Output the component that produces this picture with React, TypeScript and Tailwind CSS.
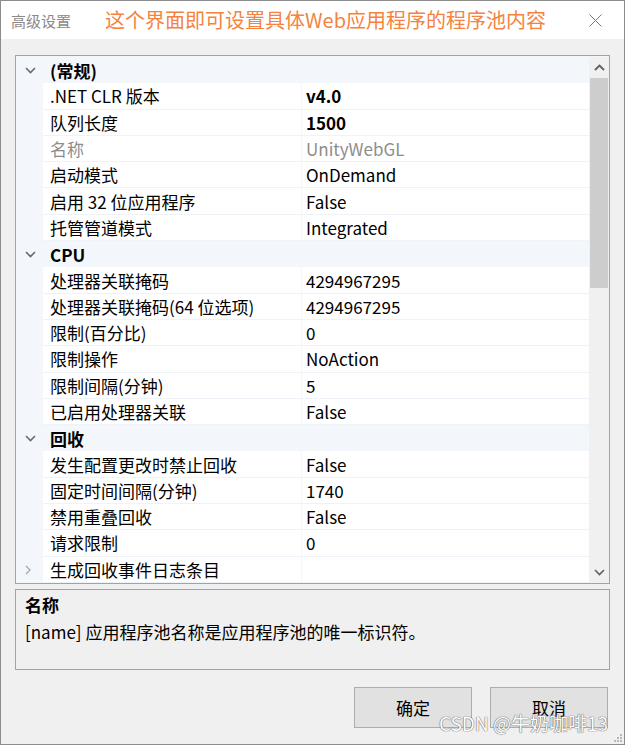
import React from 'react';

type Row =
  | { kind: 'cat'; label: string }
  | { kind: 'item'; name: string; value: string; bold?: boolean; disabled?: boolean; expand?: boolean };

const rows: Row[] = [
  { kind: 'cat', label: '(常规)' },
  { kind: 'item', name: '.NET CLR 版本', value: 'v4.0', bold: true },
  { kind: 'item', name: '队列长度', value: '1500', bold: true },
  { kind: 'item', name: '名称', value: 'UnityWebGL', disabled: true },
  { kind: 'item', name: '启动模式', value: 'OnDemand' },
  { kind: 'item', name: '启用 32 位应用程序', value: 'False' },
  { kind: 'item', name: '托管管道模式', value: 'Integrated' },
  { kind: 'cat', label: 'CPU' },
  { kind: 'item', name: '处理器关联掩码', value: '4294967295' },
  { kind: 'item', name: '处理器关联掩码(64 位选项)', value: '4294967295' },
  { kind: 'item', name: '限制(百分比)', value: '0' },
  { kind: 'item', name: '限制操作', value: 'NoAction' },
  { kind: 'item', name: '限制间隔(分钟)', value: '5' },
  { kind: 'item', name: '已启用处理器关联', value: 'False' },
  { kind: 'cat', label: '回收' },
  { kind: 'item', name: '发生配置更改时禁止回收', value: 'False' },
  { kind: 'item', name: '固定时间间隔(分钟)', value: '1740' },
  { kind: 'item', name: '禁用重叠回收', value: 'False' },
  { kind: 'item', name: '请求限制', value: '0' },
  { kind: 'item', name: '生成回收事件日志条目', value: '', expand: true },
];

const ChevronDown = ({ color = '#6b6b6b' }: { color?: string }) => (
  <svg width="11" height="7" viewBox="0 0 11 7">
    <path d="M1 1 L5.5 5.5 L10 1" fill="none" stroke={color} strokeWidth="1.6" />
  </svg>
);

const ChevronUp = ({ color = '#6b6b6b' }: { color?: string }) => (
  <svg width="11" height="7" viewBox="0 0 11 7">
    <path d="M1 6 L5.5 1.5 L10 6" fill="none" stroke={color} strokeWidth="1.8" />
  </svg>
);

const ChevronRight = () => (
  <svg width="6" height="10" viewBox="0 0 6 10">
    <path d="M1 1 L5 5 L1 9" fill="none" stroke="#a8a8a8" strokeWidth="1.3" />
  </svg>
);

const GridRow = ({ row }: { row: Row }) => {
  if (row.kind === 'cat') {
    return (
      <div className="flex h-[26.3px] items-center bg-[#f3f6fb]">
        <div className="flex w-[27px] shrink-0 justify-center pl-[2px]">
          <ChevronDown />
        </div>
        <span className="pl-[7px] font-bold text-black">{row.label}</span>
      </div>
    );
  }
  return (
    <div className="flex h-[26.3px] bg-[#f3f6fb]">
      <div className="flex w-[27px] shrink-0 items-center justify-center pr-[4px]">
        {row.expand && <ChevronRight />}
      </div>
      <div
        className={`flex w-[258px] shrink-0 items-center border-b border-[#eef2f9] bg-white pl-[7px] ${
          row.disabled ? 'text-[#8d8d8d]' : 'text-black'
        }`}
      >
        {row.name}
      </div>
      <div
        className={`ml-px flex flex-1 items-center border-b border-[#eef2f9] bg-white pl-[4px] ${
          row.disabled ? 'text-[#8d8d8d]' : 'text-black'
        } ${row.bold ? 'font-bold' : ''}`}
      >
        {row.value}
      </div>
    </div>
  );
};

export default function App() {
  return (
    <div
      className="relative flex h-[745px] w-[625px] flex-col border border-[#8c8c8c] bg-[#f0f0f0] text-[17px] leading-none"
      style={{ fontFamily: '"Noto Sans CJK SC", "Noto Sans", sans-serif' }}
    >
      {/* Title bar */}
      <div className="flex h-[38px] shrink-0 items-center bg-white pl-[10px] pr-[22px]">
        <span className="text-[15px] text-[#8a8a8a]">高级设置</span>
        <span className="ml-[34px] text-[20px] text-[#f5833f]">这个界面即可设置具体Web应用程序的程序池内容</span>
        <div className="ml-auto">
          <svg width="13" height="13" viewBox="0 0 13 13">
            <path d="M0.5 0.5 L12.5 12.5 M12.5 0.5 L0.5 12.5" stroke="#7a7a7a" strokeWidth="1" />
          </svg>
        </div>
      </div>

      <div className="flex flex-col px-[14px] pt-[16px]">
        {/* Property grid */}
        <div className="flex h-[529px] border border-[#a3a3a3] bg-[#f3f6fb] pt-px">
          <div className="flex-1 overflow-hidden">
            {rows.map((r, i) => (
              <GridRow key={i} row={r} />
            ))}
          </div>
          <div className="flex w-[20px] shrink-0 flex-col bg-[#f0f0f0]">
            <div className="flex h-[21px] items-center justify-center">
              <ChevronUp color="#5f5f5f" />
            </div>
            <div className="mx-px h-[210px] bg-[#cdcdcd]" />
            <div className="flex-1" />
            <div className="flex h-[22px] items-center justify-center">
              <ChevronDown color="#5f5f5f" />
            </div>
          </div>
        </div>

        {/* Description panel */}
        <div className="mt-[5px] h-[81px] border border-[#a3a3a3] bg-[#f0f0f0] px-[9px] pt-[6px]">
          <div className="font-bold text-black">名称</div>
          <div className="mt-[10px] text-black">[name] 应用程序池名称是应用程序池的唯一标识符。</div>
        </div>

        {/* Buttons */}
        <div className="mt-[17px] flex justify-end gap-[18px] pr-[2px]">
          <button className="h-[41px] w-[118px] border border-[#adadad] bg-[#e1e1e1] text-[17px] text-black">
            确定
          </button>
          <button className="h-[41px] w-[118px] border border-[#adadad] bg-[#e1e1e1] text-[17px] text-black">
            取消
          </button>
        </div>
      </div>

      {/* Watermark */}
      <div className="absolute bottom-[12px] right-[16px] text-[19px] text-white [text-shadow:0_0_1px_#555,0_0_1px_#555]">
        CSDN @牛奶咖啡13
      </div>

      {/* Resize grip */}
      <div className="absolute bottom-[2px] right-[2px] grid grid-cols-3 gap-px">
        <span />
        <span />
        <span className="h-[2px] w-[2px] bg-[#b8b8b8]" />
        <span />
        <span className="h-[2px] w-[2px] bg-[#b8b8b8]" />
        <span className="h-[2px] w-[2px] bg-[#b8b8b8]" />
        <span className="h-[2px] w-[2px] bg-[#b8b8b8]" />
        <span className="h-[2px] w-[2px] bg-[#b8b8b8]" />
        <span className="h-[2px] w-[2px] bg-[#b8b8b8]" />
      </div>
    </div>
  );
}
